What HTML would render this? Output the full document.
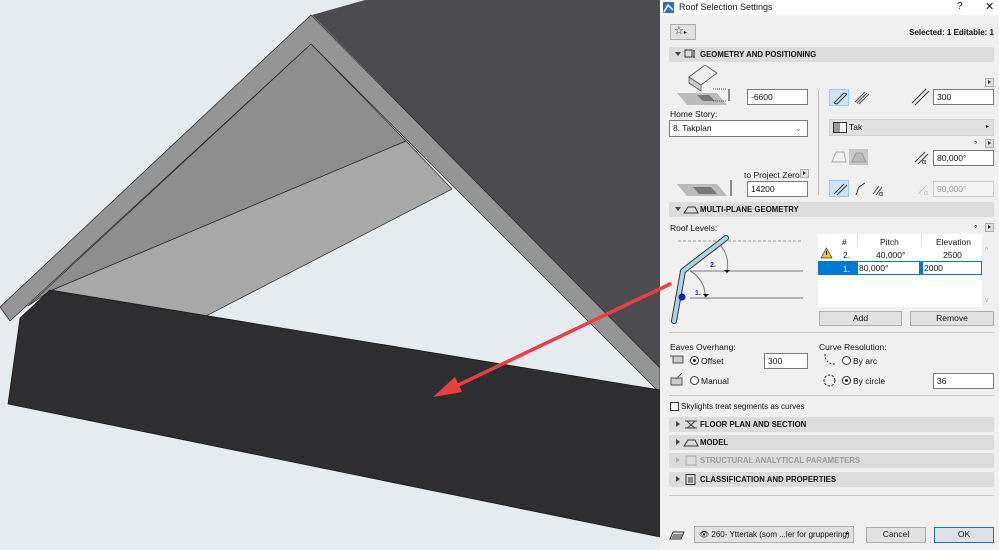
<!DOCTYPE html>
<html><head><meta charset="utf-8"><style>
*{margin:0;padding:0;box-sizing:border-box}
html{overflow:hidden;width:999px;height:550px}
body{width:999px;height:550px;overflow:hidden;background:#e5ebee;font-family:"Liberation Sans",sans-serif;position:relative;font-size:8.5px;color:#111}
.a{position:absolute}
#dlg{position:absolute;left:660px;top:0;width:339px;height:550px;background:#f0f0f0;overflow:hidden}
#dlg .a{white-space:nowrap}
.inp{position:absolute;background:#fff;border:1px solid #7a7a7a;height:16px;padding-left:3px;line-height:14px;font-size:8.5px;white-space:nowrap}
.hdr{position:absolute;left:9px;width:325px;height:15px;background:#dcdcdc;border-radius:2px;font-weight:bold;font-size:7.8px;line-height:15px}
.hdr .t{position:absolute;left:31px}
.tri{position:absolute;left:6px;top:5px;width:0;height:0;border-left:3px solid transparent;border-right:3px solid transparent;border-top:4px solid #444}
.trr{position:absolute;left:7px;top:4px;width:0;height:0;border-top:3px solid transparent;border-bottom:3px solid transparent;border-left:4px solid #444}
.btn{position:absolute;background:#e1e1e1;border:1px solid #adadad;text-align:center;font-size:8.5px;line-height:13px;white-space:nowrap;overflow:hidden}
.sm{position:absolute;width:9px;height:9px;background:#e1e1e1;border:1px solid #adadad}
.sm:after{content:"";position:absolute;left:2px;top:1px;border-top:2.5px solid transparent;border-bottom:2.5px solid transparent;border-left:3px solid #333}
.rad{position:absolute;width:9px;height:9px;border:1px solid #333;border-radius:50%;background:#fff}
.rad.on:after{content:"";position:absolute;left:2px;top:2px;width:3px;height:3px;border-radius:50%;background:#222}
.sep{position:absolute;left:9px;width:325px;height:1px;background:#c8c8c8}
</style></head><body>
<svg class="a" style="left:0;top:0" width="660" height="550">
<polygon points="312,15 365,0 660,0 660,370" fill="#4c4c50"/>
<polygon points="0,307 311,15 660,368 660,393 311,44 10,321" fill="#959595" stroke="#222" stroke-width="0.7"/>
<polygon points="311,44 406,141 50,291 28,306" fill="#8e8e8e" stroke="#222" stroke-width="0.7"/>
<polygon points="406,141 452,189 206,316 50,291" fill="#a8a8a8" stroke="#222" stroke-width="0.7"/>
<polygon points="50,290 20,318 8,404 660,537 660,390" fill="#2e2e30" stroke="#111" stroke-width="0.7"/>
<line x1="670" y1="284" x2="450" y2="389" stroke="#e84040" stroke-width="3.5"/>
<polygon points="433,397 455,377 462,392" fill="#e84040"/>
</svg>
<div id="dlg">
<div class="a" style="left:0;top:0;width:339px;height:15px;background:#fff"></div>
<svg class="a" style="left:3px;top:2px" width="11" height="11"><rect width="11" height="11" fill="#2a6ec0"/><path d="M1 10 L5 3 L10 8" stroke="#fff" stroke-width="1.5" fill="none"/></svg>
<div class="a" style="left:19px;top:2px;font-size:9px">Roof Selection Settings</div>
<div class="a" style="left:297px;top:1px;font-size:10px">?</div>
<div class="a" style="left:325px;top:0px;font-size:11px">✕</div>
<div class="btn" style="left:10px;top:24px;width:26px;height:16px;font-size:11px;line-height:13px;text-align:left;padding-left:3px">☆<span style="font-size:6px">▸</span></div>
<div class="a" style="right:5px;top:28px;font-size:8px;font-weight:bold">Selected: 1 Editable: 1</div>
<div class="hdr" style="top:47px"><div class="tri"></div><svg class="a" style="left:15px;top:2px" width="14" height="11"><rect x="1" y="1" width="7" height="7" fill="none" stroke="#333"/><path d="M10 1v8M9 2h2M9 8h2" stroke="#333"/></svg><span class="t">GEOMETRY AND POSITIONING</span></div>
<svg class="a" style="left:17px;top:65px" width="60" height="42"><polygon points="0,28 40,28 50,40 10,40" fill="#bbb"/><polygon points="12,12 28,0 40,8 24,20" fill="#eee" stroke="#555" stroke-width="0.8"/><polygon points="12,12 24,20 24,26 12,18" fill="#ccc" stroke="#555" stroke-width="0.8"/><polygon points="20,30 32,30 38,36 26,36" fill="#777"/><path d="M36 24h14M36 36h14" stroke="#555" stroke-dasharray="1,1"/><path d="M52 24v12" stroke="#222"/></svg>
<div class="inp" style="left:87px;top:89px;width:61px">-6600</div>
<div class="a" style="left:10px;top:109px">Home Story:</div>
<div class="inp" style="left:9px;top:120px;width:139px;height:17px">8. Takplan<span style="position:absolute;right:5px;top:0;color:#777">⌄</span></div>
<div class="a" style="left:84px;top:170px">to Project Zero</div>
<div class="sm" style="left:140px;top:169px"></div>
<svg class="a" style="left:17px;top:180px" width="60" height="18"><polygon points="0,4 40,4 50,16 10,16" fill="#bbb"/><polygon points="16,7 34,7 40,14 22,14" fill="#777"/><path d="M54 0v16" stroke="#222"/></svg>
<div class="inp" style="left:87px;top:181px;width:61px">14200</div>
<div class="a" style="left:158px;top:90px;width:1px;height:105px;background:#bbb"></div>
<div class="sm" style="left:325px;top:78px"></div>
<div class="a" style="left:169px;top:89px;width:20px;height:17px;background:#cce4f7;border:1px solid #99c9ef"></div>
<svg class="a" style="left:171px;top:90px" width="40" height="16"><path d="M3 13l10-10M6 14l10-10M3 13l3 1M13 3l3 1" stroke="#333" fill="none"/><path d="M24 12l10-10M26 13l10-10M28 14l10-10" stroke="#444"/></svg>
<svg class="a" style="left:250px;top:88px" width="20" height="18"><path d="M2 15l12-12M5 17l12-12M14 3l2-2M17 5l2-2" stroke="#333" fill="none"/></svg>
<div class="inp" style="left:273px;top:89px;width:61px">300</div>
<div class="a" style="left:169px;top:119px;width:165px;height:17px;background:#e1e1e1;border:1px solid #d0d0d0;line-height:15px"><span style="display:inline-block;width:14px;height:11px;border:1px solid #333;margin:2px 2px 0 3px;vertical-align:top;background:linear-gradient(90deg,#999 50%,#fff 50%)"></span>Tak<span style="position:absolute;right:4px;font-size:6px">▸</span></div>
<div class="a" style="left:314px;top:139px">°</div>
<div class="sm" style="left:325px;top:139px"></div>
<svg class="a" style="left:170px;top:149px" width="40" height="16"><polygon points="2,13 6,3 14,3 16,13" fill="none" stroke="#aaa"/><rect x="19" y="0" width="19" height="16" fill="#c8c8c8"/><polygon points="22,13 26,4 32,4 36,13" fill="#bbb" stroke="#999"/></svg>
<svg class="a" style="left:253px;top:148px" width="18" height="18"><path d="M2 14l10-10M5 16l10-10" stroke="#333"/><text x="9" y="16" font-size="8" font-family="Liberation Serif">α</text></svg>
<div class="inp" style="left:273px;top:150px;width:61px">80,000°</div>
<div class="a" style="left:169px;top:180px;width:20px;height:17px;background:#cce4f7;border:1px solid #99c9ef"></div>
<svg class="a" style="left:171px;top:181px" width="60" height="16"><path d="M3 13l10-10M6 14l10-10" stroke="#333"/><path d="M25 14l3-8 6-4" stroke="#333" fill="none"/><path d="M42 13l6-8M45 14l6-8" stroke="#333"/><text x="48" y="15" font-size="7">α</text></svg>
<svg class="a" style="left:256px;top:181px" width="16" height="16"><path d="M2 13l8-8" stroke="#bbb"/><text x="8" y="14" font-size="7" fill="#bbb">α</text></svg>
<div class="inp" style="left:273px;top:181px;width:61px;background:#f4f4f4;border-color:#ccc;color:#999">90,000°</div>
<div class="hdr" style="top:202px"><div class="tri"></div><svg class="a" style="left:14px;top:3px" width="16" height="10"><polygon points="1,8 5,2 12,2 15,8" fill="none" stroke="#333"/></svg><span class="t">MULTI-PLANE GEOMETRY</span></div>
<div class="a" style="left:10px;top:223px">Roof Levels:</div>
<div class="a" style="left:314px;top:223px">°</div>
<div class="sm" style="left:325px;top:223px"></div>
<svg class="a" style="left:0;top:230px" width="150" height="100"><path d="M18 11h125" stroke="#999" stroke-dasharray="3,2"/><path d="M30 41h113M30 68h113" stroke="#777"/><path d="M60 15a28 28 0 0 1 7 25M30 41a28 28 0 0 1 15 27" stroke="#777" fill="none"/><path d="M64 40l3 3 3-3M43 64l3 3 3-3" fill="#000"/><text x="50" y="37" font-size="7" font-weight="bold" fill="#22b">2.</text><text x="35" y="65" font-size="7" font-weight="bold" fill="#22b">1.</text><path d="M14 91L23 41L66 8" stroke="#333" stroke-width="6" fill="none" stroke-linecap="round" stroke-linejoin="round"/><path d="M14 91L23 41L66 8" stroke="#a9d5e6" stroke-width="4" fill="none" stroke-linecap="round" stroke-linejoin="round"/><circle cx="22" cy="67" r="3.5" fill="#0a1ed0"/><line x1="10" y1="54" x2="0" y2="59" stroke="#e84040" stroke-width="3.5" stroke-linecap="round"/></svg>
<div class="a" style="left:158px;top:234px;width:164px;height:73px;background:#fff"></div>
<div class="a" style="left:182px;top:237px">#</div>
<div class="a" style="left:220px;top:237px">Pitch</div>
<div class="a" style="left:276px;top:237px">Elevation</div>
<div class="a" style="left:197px;top:234px;width:1px;height:13px;background:#ddd"></div>
<div class="a" style="left:261px;top:234px;width:1px;height:13px;background:#ddd"></div>
<svg class="a" style="left:160px;top:247px" width="13" height="12"><polygon points="6.5,1 12,11 1,11" fill="#f5d000" stroke="#333" stroke-width="0.7"/><path d="M6.5 4v4" stroke="#000"/></svg>
<div class="a" style="left:183px;top:250px">2.</div>
<div class="a" style="left:216px;top:250px">40,000°</div>
<div class="a" style="left:283px;top:250px">2500</div>
<div class="a" style="left:158px;top:261px;width:164px;height:14px;background:#0078d7"></div>
<div class="a" style="left:183px;top:264px;color:#fff">1.</div>
<div class="inp" style="left:197px;top:261px;width:63px;height:14px;line-height:12px;border:1px solid #0078d7;padding-left:1px">80,000°</div>
<div class="inp" style="left:262px;top:261px;width:60px;height:14px;line-height:12px;border:1px solid #0078d7;padding-left:1px">2000</div>
<div class="a" style="left:325px;top:247px;font-size:7px;color:#aaa">^</div>
<div class="a" style="left:325px;top:297px;font-size:7px;color:#aaa">v</div>
<div class="btn" style="left:159px;top:311px;width:83px;height:15px">Add</div>
<div class="btn" style="left:250px;top:311px;width:84px;height:15px">Remove</div>
<div class="sep" style="top:332px"></div>
<div class="a" style="left:10px;top:342px">Eaves Overhang:</div>
<svg class="a" style="left:10px;top:354px" width="14" height="10"><rect x="3" y="2" width="10" height="7" fill="#ccc" stroke="#555"/><path d="M0 2h3" stroke="#555"/></svg>
<div class="rad on" style="left:30px;top:356px"></div><div class="a" style="left:41px;top:356px">Offset</div>
<div class="inp" style="left:104px;top:353px;width:44px">300</div>
<svg class="a" style="left:10px;top:373px" width="14" height="13"><rect x="1" y="5" width="11" height="7" fill="#ccc" stroke="#555"/><path d="M6 6l6-6" stroke="#555"/></svg>
<div class="rad" style="left:30px;top:376px"></div><div class="a" style="left:41px;top:376px">Manual</div>
<div class="a" style="left:159px;top:342px">Curve Resolution:</div>
<svg class="a" style="left:163px;top:352px" width="14" height="14"><path d="M2 2q0 10 10 10" stroke="#222" fill="none" stroke-dasharray="2,1.5"/></svg>
<div class="rad" style="left:182px;top:356px"></div><div class="a" style="left:193px;top:356px">By arc</div>
<svg class="a" style="left:162px;top:373px" width="15" height="15"><circle cx="7.5" cy="7.5" r="5.5" stroke="#222" fill="none" stroke-dasharray="2.5,1.5"/></svg>
<div class="rad on" style="left:182px;top:376px"></div><div class="a" style="left:193px;top:376px">By circle</div>
<div class="inp" style="left:273px;top:373px;width:61px">36</div>
<div class="sep" style="top:395px"></div>
<div class="a" style="left:10px;top:402px;width:9px;height:9px;border:1px solid #333;background:#fff"></div>
<div class="a" style="left:21px;top:402px;font-size:8px">Skylights treat segments as curves</div>
<div class="hdr" style="top:417px"><div class="trr"></div><svg class="a" style="left:15px;top:2px" width="14" height="11"><path d="M1 2h12M1 9h12M3 2l4 4 4-4M3 9l4-3 4 3" stroke="#444" fill="none"/></svg><span class="t">FLOOR PLAN AND SECTION</span></div>
<div class="hdr" style="top:435px"><div class="trr"></div><svg class="a" style="left:14px;top:3px" width="16" height="10"><polygon points="1,8 5,2 12,2 15,8" fill="none" stroke="#333"/></svg><span class="t">MODEL</span></div>
<div class="hdr" style="top:453px;color:#999"><div class="trr" style="border-left-color:#aaa"></div><svg class="a" style="left:16px;top:2px" width="12" height="11"><rect x="1" y="1" width="10" height="9" fill="none" stroke="#aaa"/></svg><span class="t">STRUCTURAL ANALYTICAL PARAMETERS</span></div>
<div class="hdr" style="top:472px"><div class="trr"></div><svg class="a" style="left:16px;top:2px" width="12" height="11"><rect x="1" y="0.5" width="9" height="10" fill="none" stroke="#333"/><path d="M3 4h5M3 6h5M3 8h5" stroke="#333"/></svg><span class="t">CLASSIFICATION AND PROPERTIES</span></div>
<div class="sep" style="top:495px"></div>
<svg class="a" style="left:9px;top:529px" width="16" height="12"><polygon points="1,10 4,3 15,3 12,10" fill="#ddd" stroke="#333"/><path d="M4 6h9M3 8h9" stroke="#333"/></svg>
<div class="btn" style="left:34px;top:526px;width:160px;height:17px;text-align:left;padding-left:4px;line-height:15px;font-size:8px">👁 260- Yttertak (som ...ler for gruppering)<span style="position:absolute;right:4px;font-size:6px">▸</span></div>
<div class="btn" style="left:206px;top:527px;width:60px;height:16px">Cancel</div>
<div class="btn" style="left:274px;top:527px;width:60px;height:16px;border:1px solid #0078d7">OK</div>
</div>
</body></html>
